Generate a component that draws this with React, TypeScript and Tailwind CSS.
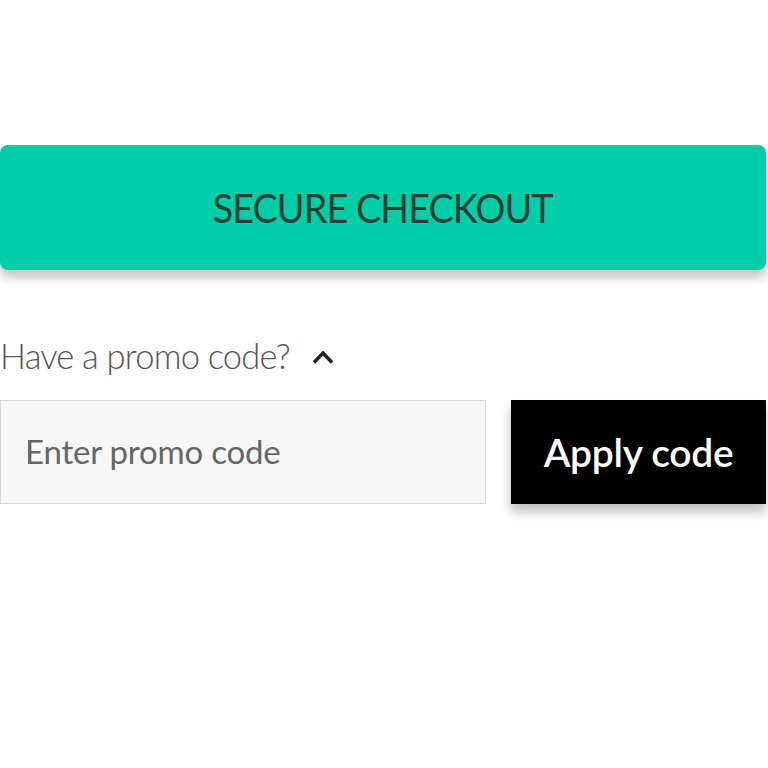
import React from "react";

export default function App() {
  return (
    <div className="w-[768px] h-[768px] bg-white overflow-hidden" style={{ fontFamily: "Lato, 'Noto Sans', sans-serif" }}>
      <div className="pt-[145px] pr-[2px]">
        <button className="w-full h-[125px] rounded-[8px] bg-[#00cea6] shadow-[0_8px_10px_rgba(0,0,0,0.22)] flex items-center justify-center">
          <span className="text-[41px] font-normal text-[#2c3e38] tracking-[-1px] scale-x-[0.92] inline-block">SECURE CHECKOUT</span>
        </button>
      </div>
      <div className="mt-[66px] flex items-center h-[40px]">
        <span className="text-[34.5px] font-light text-[#555] tracking-[-0.8px]">Have a promo code?</span>
        <svg className="ml-[22px] mt-[2px]" width="24" height="16" viewBox="0 0 24 16">
          <path d="M2 13.5 L11 4 L20 13.5" fill="none" stroke="#222" strokeWidth="3.4" />
        </svg>
      </div>
      <div className="mt-[24px] flex h-[104px] pr-[2px]">
        <div className="w-[486px] h-full bg-[#f7f7f7] border border-[#d9d9d9] flex items-center pl-[24px]">
          <span className="text-[33px] text-[#666] tracking-[-0.2px]">Enter promo code</span>
        </div>
        <button className="ml-[25px] flex-1 h-full bg-black shadow-[0_8px_10px_rgba(0,0,0,0.25)] flex items-center justify-center">
          <span className="text-[39px] font-semibold text-white tracking-[-0.3px]">Apply code</span>
        </button>
      </div>
    </div>
  );
}
